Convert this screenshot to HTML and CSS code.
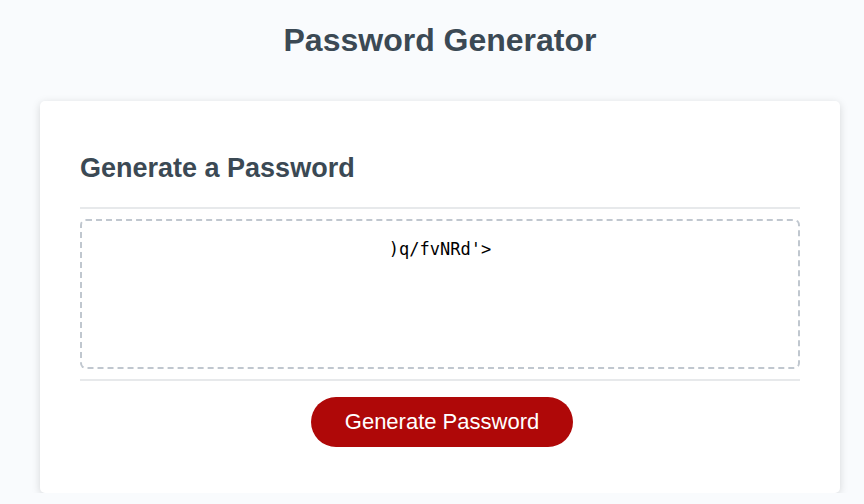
FILE: index.html
```html
<!DOCTYPE html>
<html lang="en">
<head>
<meta charset="UTF-8">
<title>Password Generator</title>
<link rel="stylesheet" href="styles.css">
</head>
<body>
<div class="wrapper">
  <header class="page-header">
    <h1 class="page-title">Password Generator</h1>
  </header>
  <div class="card">
    <div class="card-header">
      <h2 class="card-title">Generate a Password</h2>
    </div>
    <div class="card-body">
      <textarea class="password" readonly aria-label="Generated Password">)q/fvNRd'&gt;</textarea>
    </div>
    <div class="card-footer">
      <button class="btn" type="button">Generate Password</button>
    </div>
  </div>
</div>
</body>
</html>
```

FILE: styles.css
```css
html, body {
  margin: 0;
  padding: 0;
}

body {
  background-color: #f9fbfd;
  font-family: "Liberation Sans", Arial, sans-serif;
  overflow: hidden;
}

.wrapper {
  width: 800px;
  margin-left: 40px;
}

.page-header {
  text-align: center;
  color: #3b4954;
  padding: 22px 20px 20px;
}

.page-title {
  margin: 0 0 22px;
  font-size: 32px;
  line-height: 37px;
  font-weight: bold;
}

.card {
  box-sizing: border-box;
  width: 800px;
  background-color: #ffffff;
  border-radius: 5px;
  box-shadow: rgba(0, 0, 0, 0.15) 0 2px 8px 0;
  color: #3b4954;
  font-size: 18px;
  padding: 30px 40px;
}

.card-header {
  border-bottom: 2px solid #e7e9eb;
}

.card-title {
  margin: 22px 0 23px;
  font-size: 27px;
  line-height: 31px;
  font-weight: bold;
}

.card-body {
  padding: 10px 0;
}

.password {
  display: block;
  box-sizing: border-box;
  width: 100%;
  height: 150px;
  margin: 0;
  padding: 17px 15px 0;
  border: 2px dashed #c0c7cf;
  border-radius: 6px;
  font-family: "DejaVu Sans Mono", "Liberation Mono", monospace;
  font-size: 17px;
  line-height: 22px;
  color: #000000;
  text-align: center;
  resize: none;
  overflow: hidden;
  outline: none;
  background: #ffffff;
}

.card-footer {
  border-top: 2px solid #e7e9eb;
  text-align: center;
}

.btn {
  display: inline-block;
  border: none;
  background-color: #af0808;
  border-radius: 25px;
  color: #ffffff;
  font-family: "Liberation Sans", Arial, sans-serif;
  font-size: 22px;
  line-height: 22px;
  margin: 16px 16px 16px 20px;
  padding: 14px 34px;
  cursor: pointer;
}
```
